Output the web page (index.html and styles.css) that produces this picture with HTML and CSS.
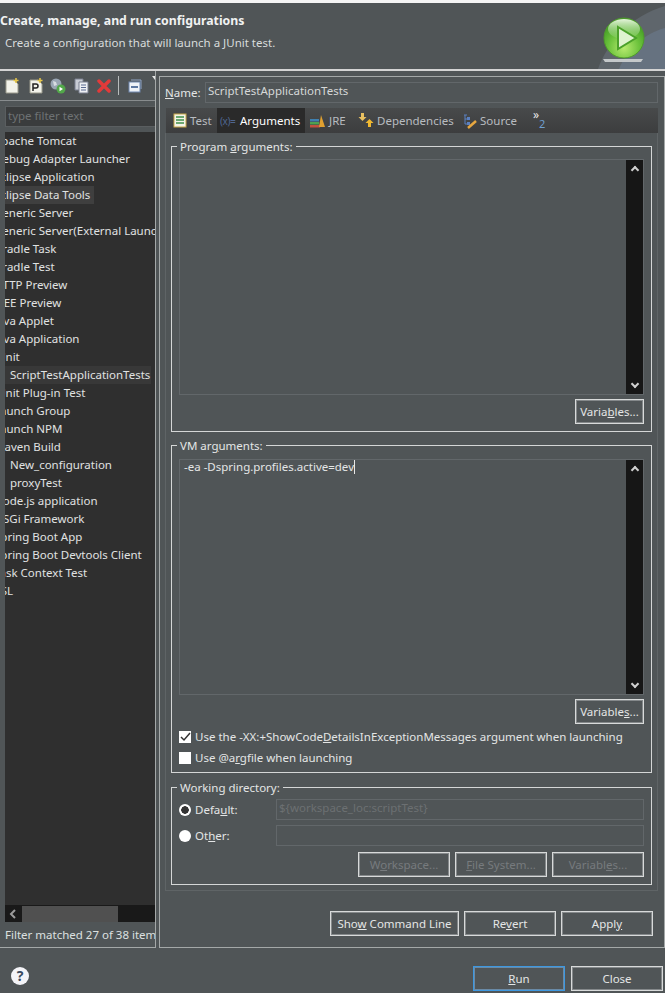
FILE: index.html
```html
<!DOCTYPE html>
<html lang="en">
<head>
<meta charset="utf-8">
<title>Run Configurations</title>
<link rel="stylesheet" href="styles.css">
</head>
<body>
<div class="topstrip"></div>
<header class="banner">
  <div class="banner-title">Create, manage, and run configurations</div>
  <div class="banner-desc">Create a configuration that will launch a JUnit test.</div>
  <svg class="banner-art" width="68" height="66" viewBox="0 0 68 66">
    <defs>
      <radialGradient id="ball" cx="50%" cy="75%" r="70%">
        <stop offset="0" stop-color="#b6ea6e"/><stop offset=".55" stop-color="#6cc23c"/><stop offset="1" stop-color="#3f9a22"/>
      </radialGradient>
      <linearGradient id="gloss" x1="0" y1="0" x2="0" y2="1">
        <stop offset="0" stop-color="#e6f5dc"/><stop offset="1" stop-color="#8ed070" stop-opacity=".3"/>
      </linearGradient>
    </defs>
    <path d="M1 66 C10 40 35 12 68 3 V66Z" fill="#5f666c"/>
    <path d="M22 66 C30 46 48 30 68 25 V66Z" fill="#667280"/>
    <path d="M6 56 H46 L44 59 H8Z" fill="#c4c8ca"/>
    <circle cx="27" cy="35" r="20" fill="url(#ball)" stroke="#4f9a2c"/>
    <ellipse cx="27" cy="26" rx="16" ry="10" fill="url(#gloss)"/>
    <path d="M21 24 L39 35 L21 46Z" fill="#dff3cf" stroke="#4ba02a" stroke-width="2"/>
  </svg>
</header>
<div class="separator"></div>
<main class="main">
  <aside class="left">
    <div class="toolbar">
      <svg class="ti" width="14" height="16" viewBox="0 0 14 16"><path d="M1 2h8l4 4v9H1z" fill="#f2f2ea" stroke="#9a9a8c"/><path d="M11 0v5M8.500 2.500h5" stroke="#e8c84a" stroke-width="1.500"/></svg>
      <svg class="ti t2" width="14" height="16" viewBox="0 0 14 16"><path d="M1 2h8l4 4v9H1z" fill="#f2f2ea" stroke="#9a9a8c"/><path d="M11 0v5M8.500 2.500h5" stroke="#e8c84a" stroke-width="1.500"/><path d="M4 13V6h3a2 2 0 010 4H4" fill="none" stroke="#222" stroke-width="1.500"/></svg>
      <svg class="ti t3" width="16" height="16" viewBox="0 0 16 16"><circle cx="6" cy="6" r="5.500" fill="#9aa6b4"/><path d="M3 3l3 1 1 3-3 1z" fill="#d8dde2"/><circle cx="11" cy="11" r="4.500" fill="#52a84a"/><path d="M9.500 8.800l3.500 2.200-3.500 2.200z" fill="#fff"/></svg>
      <svg class="ti t4" width="15" height="16" viewBox="0 0 15 16"><path d="M1 1h8v11H1z" fill="#c8ccd4" stroke="#7a8090"/><path d="M5 4h9v11H5z" fill="#eef0f4" stroke="#7a8090"/><path d="M7 7h5M7 9.500h5M7 12h5" stroke="#5a6a90"/></svg>
      <svg class="ti t5" width="14" height="14" viewBox="0 0 14 14"><path d="M2 2l10 10M12 2L2 12" stroke="#e23a3a" stroke-width="3.500" stroke-linecap="round"/></svg>
      <span class="tsep"></span>
      <svg class="ti t6" width="14" height="14" viewBox="0 0 14 14"><path d="M3 1h10v9" fill="none" stroke="#8fa4c4"/><rect x="1" y="3" width="11" height="10" fill="#eef2f8" stroke="#6f88b0"/><path d="M3 8h7" stroke="#2d4f86" stroke-width="1.500"/></svg>
      <svg class="ti t7" width="6" height="5" viewBox="0 0 6 5"><path d="M0 0h6L3 4z" fill="#e8e8e8"/></svg>
    </div>
    <div class="filter">type filter text</div>
    <div class="tree">
      <div class="tree-scroll">
        <div class="node">Apache Tomcat</div>
        <div class="node">Debug Adapter Launcher</div>
        <div class="node">Eclipse Application</div>
        <div class="node"><span class="hover">Eclipse Data Tools</span></div>
        <div class="node">Generic Server</div>
        <div class="node">Generic Server(External Launcher)</div>
        <div class="node">Gradle Task</div>
        <div class="node">Gradle Test</div>
        <div class="node">HTTP Preview</div>
        <div class="node">J2EE Preview</div>
        <div class="node">Java Applet</div>
        <div class="node">Java Application</div>
        <div class="node">JUnit</div>
        <div class="node child selected">ScriptTestApplicationTests</div>
        <div class="node">JUnit Plug-in Test</div>
        <div class="node">Launch Group</div>
        <div class="node">Launch NPM</div>
        <div class="node">Maven Build</div>
        <div class="node child">New_configuration</div>
        <div class="node child">proxyTest</div>
        <div class="node">Node.js application</div>
        <div class="node">OSGi Framework</div>
        <div class="node">Spring Boot App</div>
        <div class="node">Spring Boot Devtools Client</div>
        <div class="node">Task Context Test</div>
        <div class="node">XSL</div>
      </div>
    </div>
    <div class="hscroll">
      <svg class="harrow" width="8" height="10" viewBox="0 0 8 10"><path d="M6 1L2 5l4 4" fill="none" stroke="#9a9a9a" stroke-width="2"/></svg>
      <div class="hthumb"></div>
    </div>
    <div class="status">Filter matched 27 of 38 items</div>
  </aside>

  <section class="right">
    <div class="namerow">
      <label class="namelabel"><u>N</u>ame:</label>
      <div class="field nameinput">ScriptTestApplicationTests</div>
    </div>
    <nav class="tabs">
      <div class="tab tab-test">
        <svg width="15" height="15" viewBox="0 0 15 15"><rect x="1" y="1" width="12" height="13" fill="#f4f4e8" stroke="#c8a84a"/><path d="M3 4h8M3 7h8M3 10h8" stroke="#3f8f4a" stroke-width="1.500"/></svg>
        <span>Test</span>
      </div>
      <div class="tab tab-args active">
        <span class="argicon">(x)=</span>
        <span>Arguments</span>
      </div>
      <div class="tab tab-jre">
        <svg width="15" height="14" viewBox="0 0 15 14"><path d="M0 5h9v2.500H0z" fill="#3f80b0"/><path d="M0 8h9v2.500H0z" fill="#4ea050"/><path d="M0 11h10v2.500H0z" fill="#c05040"/><path d="M9 13l2-12 4 12" fill="#e0a030"/></svg>
        <span>JRE</span>
      </div>
      <div class="tab tab-deps">
        <svg width="16" height="15" viewBox="0 0 16 15"><path d="M3 0h3v4h2.500L4.500 8 .5 4H3z" fill="#e8c060"/><path d="M10 14h3v-4h2.500l-4-4-4 4H10z" fill="#f0b830"/></svg>
        <span>Dependencies</span>
      </div>
      <div class="tab tab-src">
        <svg width="16" height="16" viewBox="0 0 16 16"><path d="M2 2h3M3 2v9h3M3 6h3" fill="none" stroke="#5a80c0"/><rect x="5" y="4" width="3" height="3" fill="#5a80c0"/><rect x="5" y="9" width="3" height="3" fill="#5a80c0"/><path d="M6 15l8-7" stroke="#e8a840" stroke-width="2.500"/></svg>
        <span>Source</span>
      </div>
      <div class="tab-more"><span class="chev">»</span><span class="num">2</span></div>
    </nav>
    <div class="tabbody">
      <div class="group group-prog">
        <div class="legend">Program <u>a</u>rguments:</div>
        <div class="textarea">
          <div class="vscroll"><span class="cv up"></span><span class="cv down"></span></div>
        </div>
        <div class="btnrow"><button class="btn">Varia<u>b</u>les...</button></div>
      </div>
      <div class="group group-vm">
        <div class="legend">VM ar<u>g</u>uments:</div>
        <div class="textarea">
          <div class="vtext">-ea -Dspring.profiles.active=dev<span class="caret"></span></div>
          <div class="vscroll"><span class="cv up"></span><span class="cv down"></span></div>
        </div>
        <div class="btnrow"><button class="btn">Variable<u>s</u>...</button></div>
        <div class="check first"><span class="box checked"><svg width="11" height="10" viewBox="0 0 11 10"><path d="M1 5l3 3 6-7" fill="none" stroke="#333" stroke-width="1.500"/></svg></span><span>Use the -XX:+ShowCode<u>D</u>etailsInExceptionMessages argument when launching</span></div>
        <div class="check"><span class="box"></span><span>Use @a<u>r</u>gfile when launching</span></div>
      </div>
      <div class="group group-wd">
        <div class="legend">Working directory:</div>
        <div class="wdrow">
          <span class="radio on"></span><span class="wdlabel">Defa<u>u</u>lt:</span>
          <div class="field disabled">${workspace_loc:scriptTest}</div>
        </div>
        <div class="wdrow second">
          <span class="radio"></span><span class="wdlabel">Ot<u>h</u>er:</span>
          <div class="field disabled"></div>
        </div>
        <div class="btnrow wdbtns">
          <button class="btn off">W<u>o</u>rkspace...</button>
          <button class="btn off"><u>F</u>ile System...</button>
          <button class="btn off">Variabl<u>e</u>s...</button>
        </div>
      </div>
    </div>
    <div class="actions">
      <button class="btn cmd">Sho<u>w</u> Command Line</button>
      <button class="btn">Re<u>v</u>ert</button>
      <button class="btn">Appl<u>y</u></button>
    </div>
  </section>
</main>
<footer class="footer">
  <div class="help">?</div>
  <div class="footbtns">
    <button class="btn primary"><u>R</u>un</button>
    <button class="btn">Close</button>
  </div>
</footer>
</body>
</html>
```

FILE: styles.css
```css
* { box-sizing: border-box; }
html, body { margin: 0; height: 993px; overflow: hidden; }
body {
  background: #505557;
  color: #e4e6e6;
  font: 11.5px/16px "Noto Sans", "Open Sans", sans-serif;
}
u { text-underline-offset: 1px; }

.topstrip { height: 3px; background: #f4f4f4; }
.banner { height: 66px; position: relative; }
.banner-title { font-size: 12.3px; font-weight: 700; padding-top: 10px; color: #f0f2f2; }
.banner-desc { padding: 6px 0 0 5px; color: #d8dcdc; }
.banner-art { position: absolute; right: 0; top: 0; }
.separator { height: 2px; background: #d4d4d4; }

.main { display: flex; height: 877px; gap: 3px; }

.left {
  width: 156px;
  border-right: 1px solid #a4a8a8;
  border-bottom: 1px solid #a4a8a8;
  display: flex;
  flex-direction: column;
  overflow: hidden;
}
.toolbar {
  height: 30px;
  flex: none;
  display: flex;
  align-items: center;
  padding-left: 5px;
  border-bottom: 1px solid #888c8e;
}
.ti { flex: none; }
.t2 { margin-left: 10px; }
.t3 { margin-left: 7px; }
.t4 { margin-left: 8px; }
.t5 { margin-left: 8px; }
.tsep { width: 1px; height: 19px; background: #b8bcbc; margin-left: 7px; flex: none; }
.t6 { margin-left: 9px; }
.t7 { margin: -14px 0 0 10px; }

.filter {
  margin: 5px 0 0 5px;
  height: 21px;
  flex: none;
  background: #3a3c3d;
  border: 1px solid #5a5e60;
  border-right: 0;
  color: #6e7274;
  padding: 1px 0 0 2px;
  white-space: nowrap;
}
.tree {
  margin: 5px 0 0 5px;
  height: 773px;
  flex: none;
  background: #2f2f2f;
  overflow: hidden;
}
.tree-scroll { margin-left: -11px; }
.node { height: 18px; line-height: 18px; white-space: nowrap; color: #e0e2e2; }
.child { padding-left: 16px; }
.hover { display: inline-block; background: #3f3f3f; padding-right: 4px; }
.selected { background: linear-gradient(#383838, #383838) no-repeat 11px 0 / 146px 18px; }

.hscroll {
  margin-left: 5px;
  height: 17px;
  flex: none;
  background: #191919;
  display: flex;
  align-items: center;
  padding-left: 4px;
}
.harrow { flex: none; }
.hthumb { width: 96px; height: 16px; background: #505050; margin-left: 5px; }
.status { margin-top: 4px; padding-left: 5px; white-space: nowrap; line-height: 18px; color: #dde0e0; }

.right {
  flex: 1;
  margin-top: 5px;
  border: 1px solid #a4a8a8;
  display: flex;
  flex-direction: column;
}
.namerow { display: flex; align-items: center; margin: 4px 6px 0 5px; height: 22px; }
.namelabel { width: 40px; flex: none; position: relative; top: 1px; }
.field {
  border: 1px solid #62676a;
  flex: 1;
  height: 21px;
  line-height: 16px;
  padding-left: 2px;
  white-space: nowrap;
  overflow: hidden;
  color: #d6d8d8;
}
.tabs {
  margin: 5px 6px 0 6px;
  height: 25px;
  flex: none;
  background: linear-gradient(#484a4b, #3c3d3e);
  display: flex;
  align-items: stretch;
  color: #b8bcc0;
}
.tab { display: flex; align-items: center; white-space: nowrap; }
.tab > span:last-child { padding-top: 1px; }
.tab-test { width: 51px; padding-left: 7px; gap: 2px; }
.tab-test svg, .tab-jre svg, .tab-deps svg, .tab-src svg { flex: none; }
.active { background: #2a2a2a; color: #fff; }
.tab-args { width: 88px; padding-left: 3px; gap: 2px; }
.argicon { font-size: 10px; color: #4f6690; width: 18px; letter-spacing: -.4px; }
.tab-jre { width: 50px; padding-left: 5px; gap: 4px; }
.tab-deps { width: 104px; padding-left: 3px; gap: 3px; }
.tab-src { width: 72px; padding-left: 3px; gap: 2px; }
.tab-more { padding: 2px 0 0 2px; width: 20px; color: #e8e8e8; }
.chev { font-size: 12px; line-height: 10px; display: inline-block; vertical-align: top; }
.num { font-size: 11px; color: #6f9fd0; display: inline-block; margin-top: 6px; }

.tabbody {
  margin: 0 6px 0 5px;
  height: 758px;
  flex: none;
  border: 1px solid #5f6466;
  border-top: 0;
  padding: 13px 5px 0 5px;
  display: flex;
  flex-direction: column;
  gap: 13px;
}
.group {
  position: relative;
  border: 1px solid #d4d6d6;
  padding: 12px 7px 0 7px;
  flex: none;
}
.group-prog { height: 286px; }
.group-vm { height: 328px; padding-top: 13px; }
.group-wd { height: 98px; padding-top: 11px; margin-top: 1px; }
.legend {
  position: absolute;
  left: 5px;
  top: -9px;
  padding: 0 3px;
  background: #505557;
  white-space: nowrap;
  line-height: 17px;
}
.textarea {
  position: relative;
  height: 236px;
  border: 1px solid #62676a;
}
.vscroll {
  position: absolute;
  top: 0;
  right: 0;
  bottom: 0;
  width: 17px;
  background: #161616;
  display: flex;
  flex-direction: column;
  justify-content: space-between;
  align-items: center;
  padding: 7px 0;
}
.cv {
  width: 6px;
  height: 6px;
  border-left: 2px solid #d0d0d0;
  border-top: 2px solid #d0d0d0;
  transform: rotate(45deg);
}
.cv.down { transform: rotate(225deg); }
.vtext { padding: 0 0 0 4px; line-height: 14px; white-space: nowrap; }
.caret { display: inline-block; width: 1px; height: 14px; background: #e8e8e8; vertical-align: -3px; }

.btnrow { display: flex; justify-content: flex-end; gap: 5px; margin-top: 4px; }
.btn {
  width: 92px;
  height: 25px;
  padding: 0;
  font: inherit;
  line-height: 20px;
  color: #e4e6e6;
  background: #505557;
  border: 1px solid #d8dada;
  box-shadow: inset 0 0 0 1px #85898b;
}
.group .btnrow > .btn { width: 69px; }
.group .wdbtns { margin-top: 6px; }
.group .wdbtns > .btn { width: 92px; }
.group .wdbtns > .off { color: #777b7e; }
.cmd { width: 129px; }
.primary { border-color: #3e98e0; box-shadow: inset 0 0 0 1px #6a8aa6; }

.check { display: flex; align-items: center; height: 21px; gap: 4px; white-space: nowrap; }
.check.first { margin-top: 2px; }
.box {
  width: 12px;
  height: 12px;
  background: #fff;
  flex: none;
  display: flex;
  align-items: center;
  justify-content: center;
}
.wdrow { display: flex; align-items: center; height: 21px; }
.wdrow.second { margin-top: 5px; }
.radio {
  width: 12px;
  height: 12px;
  border-radius: 50%;
  background: #fff;
  flex: none;
}
.radio.on { background: radial-gradient(circle, #333 0 3.500px, #fff 4px); }
.wdlabel { width: 85px; padding-left: 4px; flex: none; }
.disabled { color: #6c7072; }

.actions { display: flex; justify-content: flex-end; gap: 5px; margin: 20px 11px 0 0; }

.footer {
  height: 45px;
  padding: 18px 2px 0 11px;
  display: flex;
  justify-content: space-between;
}
.help {
  width: 18px;
  height: 18px;
  margin-top: 1px;
  border-radius: 50%;
  background: #f4f4f8;
  color: #3a4a60;
  font: 700 14px/18px "Noto Sans", sans-serif;
  text-align: center;
}
.footbtns { display: flex; gap: 6px; }
```
